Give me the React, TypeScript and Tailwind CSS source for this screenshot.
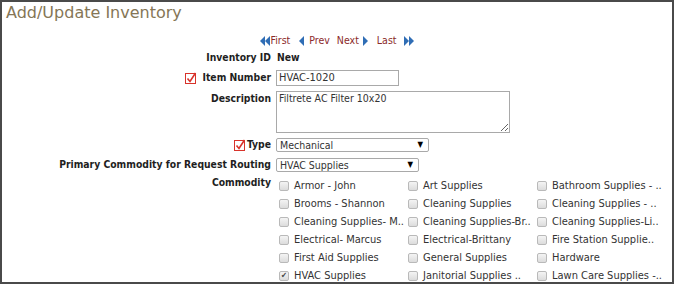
import React from 'react';

const commodities: { label: string; checked?: boolean }[] = [
  { label: 'Armor - John' },
  { label: 'Art Supplies' },
  { label: 'Bathroom Supplies - ..' },
  { label: 'Brooms - Shannon' },
  { label: 'Cleaning Supplies' },
  { label: 'Cleaning Supplies - ..' },
  { label: 'Cleaning Supplies- M..' },
  { label: 'Cleaning Supplies-Br..' },
  { label: 'Cleaning Supplies-Li..' },
  { label: 'Electrical- Marcus' },
  { label: 'Electrical-Brittany' },
  { label: 'Fire Station Supplie..' },
  { label: 'First Aid Supplies' },
  { label: 'General Supplies' },
  { label: 'Hardware' },
  { label: 'HVAC Supplies', checked: true },
  { label: 'Janitorial Supplies ..' },
  { label: 'Lawn Care Supplies -..' },
];

function RequiredIcon() {
  return (
    <svg width="12" height="12" viewBox="0 0 12 12" className="shrink-0">
      <rect x="0.5" y="1.5" width="10" height="10" fill="white" stroke="#d8332b" strokeWidth="1" />
      <path d="M2.5 6.5 L5 9.5 L10.5 1" fill="none" stroke="#d8332b" strokeWidth="1.6" />
    </svg>
  );
}

function Select({ value, width }: { value: string; width: string }) {
  return (
    <div
      className={`${width} h-[14px] border border-[#a9a9a9] rounded-[2px] bg-white flex items-center justify-between pl-[3px] pr-[5px] text-[#333] text-[10.5px] leading-none`}
    >
      <span>{value}</span>
      <span className="text-[8px] text-black">▼</span>
    </div>
  );
}

function NavArrow({ dir, double }: { dir: 'left' | 'right'; double?: boolean }) {
  const single = dir === 'left' ? 'M5 0 L5 10 L0 5 Z' : 'M0 0 L0 10 L5 5 Z';
  return double ? (
    <svg width="10" height="10" viewBox="0 0 10 10" className="block">
      {dir === 'left' ? (
        <>
          <path d="M5 0 L5 10 L0 5 Z" fill="#2f6db5" />
          <path d="M10 0 L10 10 L5 5 Z" fill="#2f6db5" />
        </>
      ) : (
        <>
          <path d="M0 0 L0 10 L5 5 Z" fill="#2f6db5" />
          <path d="M5 0 L5 10 L10 5 Z" fill="#2f6db5" />
        </>
      )}
    </svg>
  ) : (
    <svg width="5" height="10" viewBox="0 0 5 10" className="block">
      <path d={single} fill="#2f6db5" />
    </svg>
  );
}

export default function App() {
  return (
    <div className="w-[674px] h-[284px] border-2 border-[#4a4a4a] bg-white overflow-hidden font-['DejaVu_Sans_Condensed','DejaVu_Sans',Verdana,sans-serif] text-[11px] text-[#1e1e1e]">
      {/* Title */}
      <div className="h-[24px] pl-[4px] font-['DejaVu_Sans',Verdana,sans-serif] text-[16px] leading-[22px] text-[#857656]">
        Add/Update Inventory
      </div>

      {/* Record navigation */}
      <div className="mt-[8px] h-[14px] flex items-center justify-center text-[#8b2a2a] text-[10.5px]">
        <NavArrow dir="left" double />
        <span>First</span>
        <span className="ml-[9px]"><NavArrow dir="left" /></span>
        <span className="ml-[5px]">Prev</span>
        <span className="ml-[7px]">Next</span>
        <span className="ml-[4px]"><NavArrow dir="right" /></span>
        <span className="ml-[9px]">Last</span>
        <span className="ml-[7px]"><NavArrow dir="right" double /></span>
      </div>

      {/* Inventory ID */}
      <div className="mt-[2px] h-[16px] flex items-center font-bold text-[10.3px]">
        <div className="w-[269px] text-right">Inventory ID</div>
        <div className="ml-[6px]">New</div>
      </div>

      {/* Item Number */}
      <div className="mt-[4px] h-[16px] flex items-center">
        <div className="w-[269px] flex items-center justify-end gap-[5px] font-bold text-[10.3px]">
          <RequiredIcon />
          <span>Item Number</span>
        </div>
        <input
          readOnly
          defaultValue="HVAC-1020"
          className="ml-[5px] w-[123px] h-[16px] border border-[#a9a9a9] px-[2px] text-[11px] text-[#333] outline-none"
        />
      </div>

      {/* Description */}
      <div className="mt-[5px] flex items-start">
        <div className="w-[269px] text-right font-bold text-[10.3px] leading-[14px]">Description</div>
        <textarea
          readOnly
          defaultValue="Filtrete AC Filter 10x20"
          className="ml-[5px] w-[234px] h-[42px] border border-[#a9a9a9] px-[2px] py-0 text-[10.5px] leading-[13px] text-[#333] outline-none resize"
        />
      </div>

      {/* Type */}
      <div className="mt-[5px] h-[14px] flex items-center">
        <div className="w-[269px] flex items-center justify-end gap-[1px] font-bold text-[10.3px]">
          <RequiredIcon />
          <span>Type</span>
        </div>
        <div className="ml-[5px]">
          <Select value="Mechanical" width="w-[153px]" />
        </div>
      </div>

      {/* Primary Commodity */}
      <div className="mt-[6px] h-[14px] flex items-center">
        <div className="w-[269px] text-right font-bold text-[10.3px]">Primary Commodity for Request Routing</div>
        <div className="ml-[5px]">
          <Select value="HVAC Supplies" width="w-[143px]" />
        </div>
      </div>

      {/* Commodity */}
      <div className="mt-[3px] flex items-start">
        <div className="w-[269px] text-right font-bold text-[10.3px] leading-[14px]">Commodity</div>
        <div className="ml-[5px] mt-[2px] grid grid-cols-[129px_129px_129px]">
          {commodities.map((c) => (
            <div key={c.label} className="h-[18px] flex items-center pl-[3px] gap-[5px] text-[#333] whitespace-nowrap">
              <span className="shrink-0 w-[10px] h-[10px] rounded-[2px] border border-[#b9b9b9] bg-gradient-to-b from-[#f4f4f4] to-[#dcdcdc] flex items-center justify-center text-[8px] leading-none text-[#444]">
                {c.checked ? '✔' : ''}
              </span>
              <span>{c.label}</span>
            </div>
          ))}
        </div>
      </div>
    </div>
  );
}
